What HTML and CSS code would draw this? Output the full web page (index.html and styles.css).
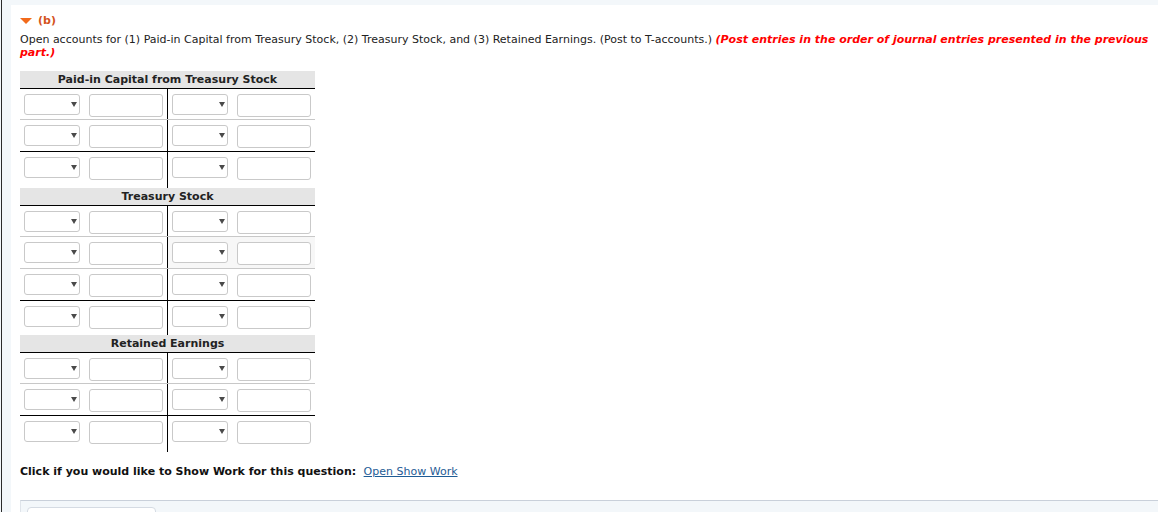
FILE: index.html
```html
<!DOCTYPE html>
<html lang="en">

<head>
  <meta charset="UTF-8">
  <meta name="viewport" content="width=device-width, initial-scale=1.0">
  <title>Part (b)</title>
  <link rel="stylesheet" href="styles.css">
</head>

<body>
  <div class="page">
    <div class="panel">
      <div class="part-title">
        <span class="caret"></span>
        <span>(b)</span>
      </div>
      <p class="question">Open accounts for (1) Paid-in Capital from Treasury Stock, (2) Treasury Stock, and (3) Retained Earnings. (Post to T-accounts.) <em class="note">(Post entries in the order of journal entries presented in the previous part.)</em></p>

      <div class="accounts">
        <div class="taccount">
          <div class="taccount-title">Paid-in Capital from Treasury Stock</div>
          <div class="trow">
            <div class="side"><span class="pick"><select></select></span><input type="text"></div>
            <div class="side"><span class="pick"><select></select></span><input type="text"></div>
          </div>
          <div class="trow">
            <div class="side"><span class="pick"><select></select></span><input type="text"></div>
            <div class="side"><span class="pick"><select></select></span><input type="text"></div>
          </div>
          <div class="trow total">
            <div class="side"><span class="pick"><select></select></span><input type="text"></div>
            <div class="side"><span class="pick"><select></select></span><input type="text"></div>
          </div>
        </div>

        <div class="taccount">
          <div class="taccount-title">Treasury Stock</div>
          <div class="trow">
            <div class="side"><span class="pick"><select></select></span><input type="text"></div>
            <div class="side"><span class="pick"><select></select></span><input type="text"></div>
          </div>
          <div class="trow">
            <div class="side"><span class="pick"><select></select></span><input type="text"></div>
            <div class="side shaded"><span class="pick"><select></select></span><input type="text"></div>
          </div>
          <div class="trow">
            <div class="side"><span class="pick"><select></select></span><input type="text"></div>
            <div class="side"><span class="pick"><select></select></span><input type="text"></div>
          </div>
          <div class="trow total short">
            <div class="side"><span class="pick"><select></select></span><input type="text"></div>
            <div class="side"><span class="pick"><select></select></span><input type="text"></div>
          </div>
        </div>

        <div class="taccount">
          <div class="taccount-title">Retained Earnings</div>
          <div class="trow">
            <div class="side"><span class="pick"><select></select></span><input type="text"></div>
            <div class="side"><span class="pick"><select></select></span><input type="text"></div>
          </div>
          <div class="trow">
            <div class="side"><span class="pick"><select></select></span><input type="text"></div>
            <div class="side"><span class="pick"><select></select></span><input type="text"></div>
          </div>
          <div class="trow total">
            <div class="side"><span class="pick"><select></select></span><input type="text"></div>
            <div class="side"><span class="pick"><select></select></span><input type="text"></div>
          </div>
        </div>
      </div>

      <div class="show-work">
        <strong>Click if you would like to Show Work for this question:</strong>
        <a href="#">Open Show Work</a>
      </div>

      <div class="footer-box">
        <div class="footer-tab"></div>
      </div>
    </div>
  </div>
</body>

</html>
```

FILE: styles.css
```css
* {
  box-sizing: border-box;
}

body {
  margin: 0;
  background: #f3f7fa;
  font-family: 'DejaVu Sans', Verdana, sans-serif;
  font-size: 11px;
  color: #222;
  overflow: hidden;
}

.page {
  margin-left: 1px;
  border-left: 1px solid #2b2b2b;
  padding: 5px 0 0 9px;
  min-height: 512px;
}

.panel {
  background: white;
  padding: 9px 0 0 9px;
  min-height: 507px;
}

.part-title {
  display: flex;
  align-items: center;
  gap: 6px;
  color: #d4531c;
  font-weight: bold;
  line-height: 13px;
}

.caret {
  width: 0;
  height: 0;
  border-left: 6px solid transparent;
  border-right: 6px solid transparent;
  border-top: 6px solid #f26a1b;
  margin-top: 1px;
}

.question {
  margin: 6px 0 0 0;
  line-height: 13px;
  max-width: 1132px;
}

.note {
  color: #f00;
  font-weight: bold;
}

.accounts {
  margin-top: 12px;
  width: 295px;
}

.taccount-title {
  background: #e5e5e5;
  border-bottom: 1px solid #000;
  text-align: center;
  font-weight: bold;
  line-height: 17px;
  height: 18px;
}

.trow {
  display: flex;
  border-top: 1px solid #c8c8c8;
}

.trow:nth-child(2) {
  border-top: none;
}

.trow.total {
  border-top: 1px solid #000;
}

.side {
  flex: 1;
  display: flex;
  align-items: flex-start;
  gap: 9px;
  padding: 5px 4px 0 4px;
  height: 31px;
}

.trow:nth-child(2) .side {
  height: 30px;
}

.side:first-child {
  border-right: 1px solid #000;
}

.trow.total .side {
  height: 36px;
}

.trow.total.short .side {
  height: 34px;
}

.side.shaded {
  background: #f7f7f7;
}

.pick {
  position: relative;
  display: block;
}

.pick::after {
  content: "";
  position: absolute;
  right: 3px;
  top: 8px;
  border-left: 3px solid transparent;
  border-right: 3px solid transparent;
  border-top: 5px solid #4a4a4a;
  pointer-events: none;
}

select {
  appearance: none;
  -webkit-appearance: none;
  display: block;
  width: 56px;
  height: 21px;
  background: white;
  border: 1px solid #c9c9c9;
  border-radius: 3px;
  margin: 0;
}

input {
  display: block;
  width: 74px;
  height: 23px;
  border: 1px solid #c9c9c9;
  border-radius: 3px;
  margin: 0;
  padding: 0 4px;
  background: white;
}

.show-work {
  margin-top: 13px;
  line-height: 13px;
  color: #111;
}

.show-work a {
  color: #1f5c95;
  margin-left: 4px;
}

.footer-box {
  margin-top: 22px;
  border-top: 1px solid #c9d0da;
  border-left: 1px solid #dfe4ea;
  background: #f3f7fa;
  padding: 6px 0 0 6px;
  height: 20px;
}

.footer-tab {
  width: 129px;
  height: 20px;
  background: white;
  border: 1px solid #d5dbe3;
  border-radius: 4px 4px 0 0;
}
```
